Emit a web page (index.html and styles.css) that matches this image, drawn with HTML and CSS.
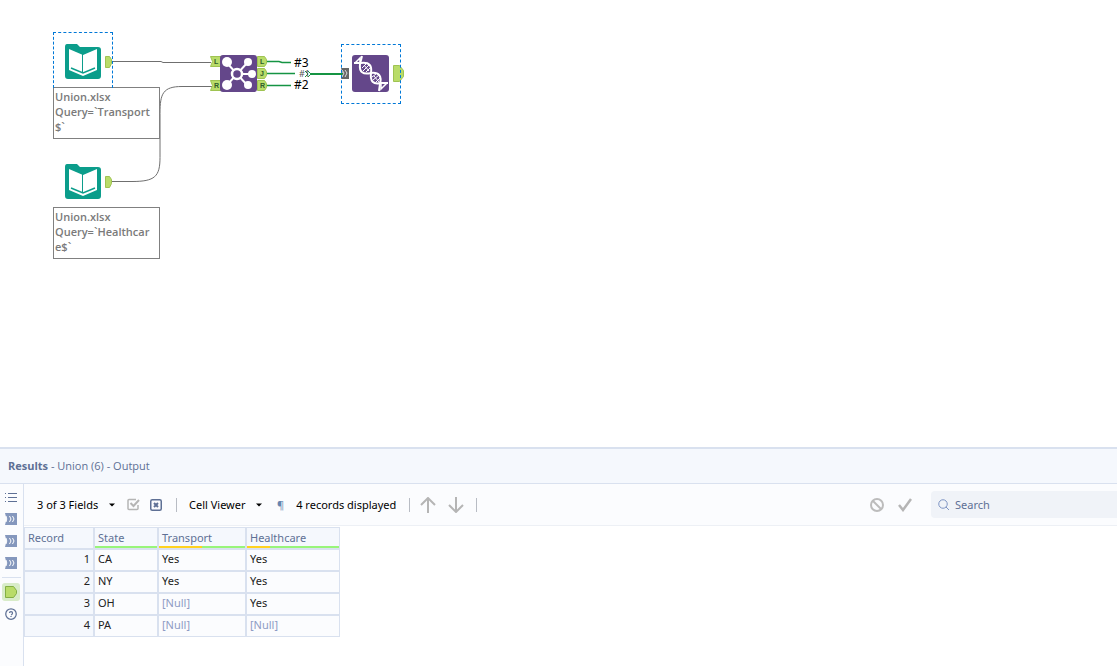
FILE: index.html
```html
<!DOCTYPE html>
<html lang="en">
  <head>
    <meta charset="utf-8">
    <title>Workflow - Union</title>
    <link rel="stylesheet" href="styles.css">
  </head>
  <body>
    <!-- shared shapes -->
    <svg class="defs" aria-hidden="true">
      <symbol id="book" viewBox="0 0 37 37">
        <path fill="#0b9d8b" d="M3 1h10l3 3h18q3 0 3 3v26q0 3-3 3H4q-3 0-3-3V4q0-3 2-3z"/>
        <path fill="#fff" d="M5 6l14 6 14-6v21l-14 6-14-6z"/>
        <path fill="none" stroke="#0b9d8b" stroke-width="1.500" d="M7 25l12 5 12-5"/>
        <path stroke="#0b9d8b" d="M18.500 11v19"/>
      </symbol>
      <symbol id="out" viewBox="0 0 8 12">
        <path fill="#b9dc69" stroke="#9fc352" d="M.5 .5h4l2 3v4l-2 4h-4z"/>
      </symbol>
      <symbol id="multi" viewBox="0 0 12 12">
        <path fill="#8497bd" d="M0 0h12v12H0l1.500-6z"/>
        <path fill="none" stroke="#fff" d="M1 3q1.500 3 0 6M4.500 3L6 6l-1.500 3M7.500 3L9 6 7.500 9"/>
      </symbol>
      <symbol id="caret" viewBox="0 0 6 4">
        <path d="M0 .5h6L3 3.500z"/>
      </symbol>
    </svg>

    <main class="canvas">
      <svg class="wires" width="420" height="270" fill="none" aria-hidden="true">
        <g stroke="#6f6f6f">
          <path d="M111 61.500h50l2 1h48"/>
          <path d="M111 181.500h21c23 0 28-5 28-24v-44c0-20 3-27 22-27h30"/>
        </g>
        <g stroke="#159443">
          <path stroke-width="1.500" d="M267 61.500h12l3 1h9M267 73.500h28M267 85.500h24"/>
          <path stroke-width="2" d="M311 74h32"/>
        </g>
        <path stroke="#159443" d="M305 71l3 3-3 3M308 71l3 3-3 3"/>
      </svg>

      <div class="tool input-one">
        <div class="frame frame-input"></div>
        <svg class="tool-icon" width="37" height="37"><use href="#book"/></svg>
        <svg class="anchor" width="8" height="12"><use href="#out"/></svg>
        <p class="note">Union.xlsx<br>Query=`Transport<br>$`</p>
      </div>

      <div class="tool input-two">
        <svg class="tool-icon" width="37" height="37"><use href="#book"/></svg>
        <svg class="anchor" width="8" height="12"><use href="#out"/></svg>
        <p class="note">Union.xlsx<br>Query=`Healthcar<br>e$`</p>
      </div>

      <div class="tool join">
        <svg width="58" height="38" aria-label="Join">
          <g fill="#b9dc69" stroke="#9fc352">
            <path d="M.5 2.500h11v10H.5l2-5zM.5 26.500h11v10H.5l2-5z"/>
            <path d="M47.500 2.500h7l2 3v4l-2 3h-7zM47.500 14.500h7l2 3v4l-2 3h-7zM47.500 26.500h7l2 3v4l-2 3h-7z"/>
          </g>
          <rect x="10" y="1" width="37" height="37" rx="3" fill="#64478a"/>
          <path fill="none" stroke="#fff" stroke-width="2" d="M16 8l11 12 11-12M16 32l11-12 11 12M27 20h15"/>
          <g fill="#fff">
            <circle cx="17" cy="8" r="5"/><circle cx="38" cy="8" r="4"/>
            <circle cx="42" cy="20" r="4"/><circle cx="17" cy="31" r="5"/>
            <circle cx="38" cy="31" r="4"/>
          </g>
          <circle cx="27" cy="20" r="5" fill="#64478a" stroke="#fff" stroke-width="2.500"/>
          <g class="port">
            <text x="4" y="10">L</text><text x="4" y="34">R</text>
            <text x="50" y="10">L</text><text x="50" y="22">J</text><text x="50" y="34">R</text>
          </g>
        </svg>
      </div>

      <div class="wire-labels">
        <span>#3</span>
        <span class="joined">#1</span>
        <span>#2</span>
      </div>

      <div class="tool union">
        <div class="frame"></div>
        <svg width="64" height="60" aria-label="Union">
          <path fill="#666" d="M0 24h8v11H0l2-5z"/>
          <path fill="none" stroke="#ddd" d="M1 26l2 3-2 4M4 26l2 3-2 4"/>
          <rect x="11" y="11" width="37" height="37" rx="3" fill="#64478a"/>
          <g fill="none" stroke="#fff">
            <path stroke-width="1.500" d="M14 19l5-5v5M46 39l-6 6v-6"/>
            <g stroke-width="2">
              <path d="M21 12L19 20C18 28 22 31 30 29C38 28 41 32 39 40L38 47"/>
              <path d="M13 19H20C29 18 31 22 30 29C29 37 32 41 40 39H47"/>
            </g>
            <path d="M21 24l4-4M22 27l6-6M25 28l4-4M23 21l5 6M31 33l4-3M32 36l6-5M35 38l4-4M33 32l5 6"/>
          </g>
          <path fill="#b9dc69" stroke="#9fc352" d="M52.500 21.500h6l4 5v6l-4 5h-6z"/>
        </svg>
      </div>
    </main>

    <section class="results">
      <h1 class="results-title"><strong>Results</strong> - Union (6) - Output</h1>
      <div class="results-body">
        <nav class="rail" aria-label="Result views">
          <button class="rail-button" aria-label="Messages">
            <svg width="12" height="10" stroke="#5e7095"><path d="M0 1.500h1M3 1.500h9M0 5.500h1M3 5.500h9M0 9.500h1M3 9.500h9"/></svg>
          </button>
          <button class="rail-button" aria-label="Input 1"><svg width="12" height="12"><use href="#multi"/></svg></button>
          <button class="rail-button" aria-label="Input 2"><svg width="12" height="12"><use href="#multi"/></svg></button>
          <button class="rail-button" aria-label="Input 3"><svg width="12" height="12"><use href="#multi"/></svg></button>
          <hr class="rail-line">
          <button class="rail-button active" aria-label="Output">
            <svg width="12" height="12" fill="#b9dc69" stroke="#83ae45"><path d="M.5 .5h8l3 4v3l-3 4h-8z"/></svg>
          </button>
          <button class="rail-button" aria-label="Help">
            <svg width="12" height="12" fill="none" stroke="#5e7095" stroke-width="1.250"><circle cx="6" cy="6" r="5.250"/><path d="M4.500 5q0-1.500 1.500-1.500T7.500 5 6 7M6 8v1"/></svg>
          </button>
        </nav>

        <div class="grid-pane">
          <div class="toolbar">
            <div class="picker">
              <select aria-label="Fields"><option>3 of 3 Fields</option></select>
              <svg width="6" height="4"><use href="#caret"/></svg>
            </div>
            <button class="tool-button select-all" aria-label="Select all">
              <svg width="13" height="13" fill="none" stroke="#b5b5b5"><path stroke-width="1.500" d="M9 1.500H2q-1 0-1 1v8q0 1 1 1h8q1 0 1-1V7"/><path stroke-width="2" d="M3.500 5l3 3L12 2"/></svg>
            </button>
            <button class="tool-button" aria-label="Deselect all">
              <svg width="12" height="12" fill="none" stroke="#5e7095"><rect x=".75" y=".75" width="10.500" height="10.500" rx="1.500" stroke-width="1.500"/><path stroke-width="2" d="M4 4l4 4M8 4L4 8"/></svg>
            </button>
            <span class="divider"></span>
            <div class="picker">
              <select aria-label="Viewer"><option>Cell Viewer</option></select>
              <svg width="6" height="4"><use href="#caret"/></svg>
            </div>
            <button class="tool-button pilcrow" aria-label="Show whitespace">¶</button>
            <span class="count">4 records displayed</span>
            <span class="divider"></span>
            <button class="tool-button" aria-label="Previous">
              <svg width="16" height="16" fill="none" stroke="#b5b5b5" stroke-width="2"><path d="M8 16V2M1 8l7-7 7 7"/></svg>
            </button>
            <button class="tool-button next" aria-label="Next">
              <svg width="16" height="16" fill="none" stroke="#b5b5b5" stroke-width="2"><path d="M8 0v14M1 8l7 7 7-7"/></svg>
            </button>
            <span class="divider"></span>
            <div class="toolbar-end">
              <button class="tool-button" aria-label="Cancel">
                <svg width="14" height="14" fill="none" stroke="#bcbcbc" stroke-width="2"><circle cx="7" cy="7" r="6"/><path d="M2.500 2.500l9 9"/></svg>
              </button>
              <button class="tool-button" aria-label="Apply">
                <svg width="14" height="14" fill="none" stroke="#b5b5b5" stroke-width="2.500"><path d="M1 7l4 5 8-11"/></svg>
              </button>
              <label class="search">
                <svg width="11" height="11" fill="none" stroke="#7f95c4"><circle cx="5" cy="5" r="4.250"/><path d="M8 8l3 3"/></svg>
                <input type="text" placeholder="Search" aria-label="Search">
              </label>
            </div>
          </div>

          <table class="records">
            <thead>
              <tr>
                <th class="record">Record</th>
                <th class="state">State</th>
                <th class="transport">Transport</th>
                <th class="healthcare">Healthcare</th>
              </tr>
            </thead>
            <tbody>
              <tr><td>1</td><td>CA</td><td>Yes</td><td>Yes</td></tr>
              <tr><td>2</td><td>NY</td><td>Yes</td><td>Yes</td></tr>
              <tr><td>3</td><td>OH</td><td class="null">[Null]</td><td>Yes</td></tr>
              <tr><td>4</td><td>PA</td><td class="null">[Null]</td><td class="null">[Null]</td></tr>
            </tbody>
          </table>
        </div>
      </div>
    </section>
  </body>
</html>
```
FILE: styles.css
```css
* {
  box-sizing: border-box;
}

body {
  margin: 0;
  min-height: 100vh;
  display: flex;
  flex-direction: column;
  background: #fff;
  font-family: "Noto Sans", sans-serif;
  font-size: 11px;
}

svg {
  display: block;
  flex: none;
}

.defs {
  position: absolute;
  width: 0;
  height: 0;
}

/* workflow canvas */
.canvas {
  position: relative;
  flex: 1;
  min-height: 280px;
}

.wires {
  position: absolute;
  left: 0;
  top: 0;
}

.tool {
  position: absolute;
}

.input-one {
  left: 53px;
  top: 32px;
}

.input-two {
  left: 53px;
  top: 152px;
}

.join {
  left: 210px;
  top: 54px;
}

.union {
  left: 341px;
  top: 44px;
}

.frame {
  position: absolute;
  width: 60px;
  height: 60px;
  border: 1px dashed #0078d7;
}

.frame-input {
  height: 56px;
  border-bottom: 0;
}

.tool-icon {
  position: absolute;
  left: 11px;
  top: 11px;
}

.anchor {
  position: absolute;
  left: 52px;
  top: 24px;
}

.note {
  margin: 55px 0 0;
  width: 107px;
  height: 52px;
  padding: 1px;
  border: 1px solid #808080;
  color: #7a7a7a;
  font-family: "Open Sans", sans-serif;
  font-weight: 600;
  line-height: 15px;
}

.port {
  fill: #2f5d2c;
  font-family: "Liberation Sans", sans-serif;
  font-size: 7px;
  font-weight: bold;
}

.wire-labels {
  position: absolute;
  left: 294px;
  top: 57px;
  display: flex;
  flex-direction: column;
  font-size: 12px;
  line-height: 11px;
}

.wire-labels .joined {
  padding-left: 5px;
  color: #555;
  font-size: 9px;
}

/* results */
.results {
  flex: none;
  min-height: 219px;
  display: flex;
  flex-direction: column;
  border-top: 2px solid #d9e1ef;
}

.results-title {
  margin: 0;
  padding: 0 8px;
  border-bottom: 1px solid #d9e1ef;
  background: #f5f8fd;
  color: #5e7095;
  font-family: "Open Sans", sans-serif;
  font-size: 11px;
  font-weight: normal;
  line-height: 34px;
}

.results-title strong {
  font-weight: 700;
}

.results-body {
  flex: 1;
  display: flex;
}

.rail {
  width: 24px;
  padding: 4px 2px 0;
  border-right: 1px solid #d9e1ef;
  background: #fbfcfe;
}

button {
  display: flex;
  align-items: center;
  justify-content: center;
  padding: 0;
  border: 0;
  background: none;
  font: inherit;
}

.rail-button {
  width: 18px;
  height: 18px;
  margin-bottom: 4px;
  border-radius: 3px;
}

.rail-button.active {
  background: #d8ecc9;
}

.rail-line {
  margin: 5px 0;
  border: 0;
  border-top: 1px solid #d9e1ef;
}

.grid-pane {
  flex: 1;
  min-width: 0;
}

.toolbar {
  display: flex;
  align-items: center;
  height: 42px;
  padding-left: 13px;
  border-bottom: 1px solid #edf0f5;
  background: #fbfcfe;
  color: #000;
}

.picker {
  position: relative;
}

.picker select {
  appearance: none;
  display: block;
  padding: 0 16px 0 0;
  border: 0;
  background: none;
  color: #000;
  font: inherit;
}

.picker svg {
  position: absolute;
  right: 0;
  top: 6px;
  pointer-events: none;
}

.select-all {
  margin: 0 10px 0 12px;
}

.divider {
  width: 1px;
  height: 14px;
  margin: 0 12px 0 14px;
  background: #b8bcc4;
}

.count + .divider {
  margin: 0 10px 0 13px;
}

.next + .divider {
  margin: 0 12px;
}

.pilcrow {
  margin: 0 12px 0 15px;
  color: #6785b0;
}

.next {
  margin-left: 12px;
}

.toolbar-end {
  display: flex;
  align-items: center;
  gap: 14px;
  margin-left: auto;
}

.search {
  display: flex;
  align-items: center;
  gap: 6px;
  width: 186px;
  height: 27px;
  margin-left: 5px;
  padding-left: 7px;
  border-radius: 4px 0 0 4px;
  background: #f0f3f8;
}

.search input {
  flex: 1;
  min-width: 0;
  padding: 0;
  border: 0;
  background: none;
  font: inherit;
}

.search input::placeholder {
  color: #5e7095;
}

.records {
  margin-top: 1px;
  border-spacing: 0;
  border: 1px solid #d9e1ef;
  table-layout: fixed;
  width: 316px;
  background: #fbfcfe;
  color: #222;
  line-height: 18px;
}

.records th,
.records td {
  height: 22px;
  padding: 0 3px;
  border-right: 2px solid #d9e1ef;
  border-bottom: 2px solid #d9e1ef;
  text-align: left;
}

.records td {
  padding-bottom: 2px;
}

.records th {
  background: #f5f8fd;
  color: #5e7095;
  font-weight: normal;
}

.records th:last-child,
.records td:last-child {
  border-right: 0;
}

.records tbody tr:last-child td {
  height: 20px;
  border-bottom: 0;
}

.records td:first-child {
  background: #f5f8fd;
  text-align: right;
}

.records .null {
  color: #8e9bc4;
}

.records .record {
  width: 70px;
}

.records .state {
  width: 64px;
  background: linear-gradient(#98f57a, #98f57a) bottom / 100% 2px no-repeat padding-box #f5f8fd;
}

.records .transport {
  width: 88px;
  background: linear-gradient(to right, #ffd21f 50%, #98f57a 50%) bottom / 100% 2px no-repeat padding-box #f5f8fd;
}

.records .healthcare {
  background: linear-gradient(to right, #ffd21f 25%, #98f57a 25%) bottom / 100% 2px no-repeat padding-box #f5f8fd;
}
```
